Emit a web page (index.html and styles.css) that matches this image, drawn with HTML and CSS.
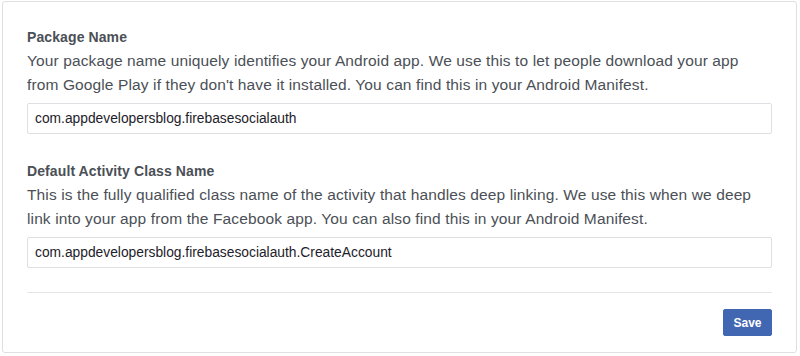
FILE: index.html
```html
<!DOCTYPE html>
<html>
<head>
<meta charset="utf-8">
<link rel="stylesheet" href="styles.css">
</head>
<body>
<div class="card">
  <div class="field">
    <div class="label">Package Name</div>
    <div class="desc">Your package name uniquely identifies your Android app. We use this to let people download your app from Google Play if they don't have it installed. You can find this in your Android Manifest.</div>
    <div class="input">com.appdevelopersblog.firebasesocialauth</div>
  </div>
  <div class="field second">
    <div class="label">Default Activity Class Name</div>
    <div class="desc">This is the fully qualified class name of the activity that handles deep linking. We use this when we deep link into your app from the Facebook app. You can also find this in your Android Manifest.</div>
    <div class="input">com.appdevelopersblog.firebasesocialauth.CreateAccount</div>
  </div>
  <div class="footer">
    <button class="save">Save</button>
  </div>
</div>
</body>
</html>
```

FILE: styles.css
```css
* { box-sizing: border-box; }
html, body { margin: 0; padding: 0; background: #fff; }
body { font-family: "Liberation Sans", Arial, sans-serif; color: #4b4f56; }
.card {
  margin: 1px 3px 0 2px;
  height: 352px;
  border: 1px solid #dddfe2;
  border-radius: 3px;
  padding: 27px 24px 0 24px;
  display: flex;
  flex-direction: column;
}
.label {
  font-weight: bold;
  font-size: 14px;
  line-height: 16px;
  height: 16px;
  letter-spacing: 0.1px;
}
.desc {
  font-size: 15.5px;
  line-height: 24px;
  letter-spacing: 0.12px;
  margin-top: 4px;
  padding-right: 10px;
}
.input {
  margin-top: 6px;
  height: 31px;
  border: 1px solid #dddfe2;
  border-radius: 2px;
  padding: 0 7px;
  font-size: 13.8px;
  line-height: 29px;
  color: #1d2129;
}
.second { margin-top: 29px; }
.footer {
  margin-top: 24px;
  border-top: 1px solid #e5e5e5;
  padding-top: 16px;
  display: flex;
  justify-content: flex-end;
}
.save {
  width: 49px;
  height: 27px;
  background: #4267b2;
  border: 1px solid #4267b2;
  border-radius: 2px;
  color: #fff;
  font-family: "Liberation Sans", Arial, sans-serif;
  font-weight: bold;
  font-size: 12px;
  padding: 0;
}
```
